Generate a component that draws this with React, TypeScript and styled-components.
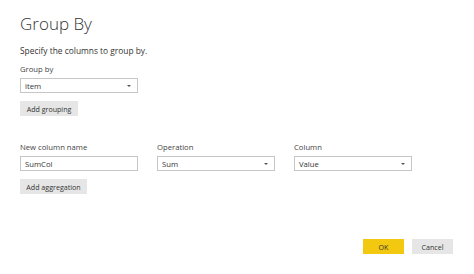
import { FC } from 'react'
import styled, { createGlobalStyle } from 'styled-components'

const GlobalStyle = createGlobalStyle`
	html, body {
		margin: 0;
		padding: 0;
		background: #ffffff;
	}
	body {
		font-family: 'Segoe UI', 'Open Sans', sans-serif;
		color: #333333;
	}
`

const Dialog = styled.div`
	position: relative;
	width: 474px;
	height: 274px;
	box-sizing: border-box;
	padding: 13px 21px 0 20px;
	display: flex;
	flex-direction: column;
	background: #ffffff;
`

const Title = styled.h1`
	margin: 0;
	font-weight: 300;
	font-size: 17px;
	line-height: 22px;
	color: #333333;
`

const Subtitle = styled.p`
	margin: 10px 0 0;
	font-size: 8.4px;
	line-height: 12px;
	color: #333333;
`

const Field = styled.div`
	display: flex;
	flex-direction: column;
	width: 118px;
`

const Label = styled.label`
	font-size: 7.7px;
	line-height: 12px;
	color: #444444;
	margin-bottom: 3px;
`

const Box = styled.div`
	position: relative;
	height: 15px;
	box-sizing: border-box;
	border: 1px solid #c6c6c6;
	padding: 0 12px 0 4px;
	display: flex;
	align-items: center;
	font-size: 7.7px;
	color: #333333;
	background: #ffffff;
`

const Arrow = styled.span`
	position: absolute;
	right: 6px;
	top: 6px;
	width: 0;
	height: 0;
	border-left: 2px solid transparent;
	border-right: 2px solid transparent;
	border-top: 2px solid #555555;
`

const Button = styled.button<{ $primary?: boolean; $width: number }>`
	width: ${(p) => p.$width}px;
	height: 15px;
	padding: 0;
	border: none;
	font-family: inherit;
	font-size: 7.1px;
	color: #333333;
	background: ${(p) => (p.$primary ? '#f2c811' : '#e6e6e6')};
`

const Section = styled.div<{ $top: number }>`
	display: flex;
	flex-direction: column;
	align-items: flex-start;
	gap: 8px;
	margin-top: ${(p) => p.$top}px;
`

const Row = styled.div`
	display: flex;
	gap: 19px;
`

const Footer = styled.div`
	display: flex;
	justify-content: flex-end;
	gap: 8px;
	margin-top: 45px;
`

const Select: FC<{ value: string }> = ({ value }) => (
	<Box>
		{value}
		<Arrow />
	</Box>
)

export default function App() {
	return (
		<>
			<GlobalStyle />
			<Dialog>
				<Title>Group By</Title>
				<Subtitle>Specify the columns to group by.</Subtitle>
				<Section $top={6}>
					<Field>
						<Label>Group by</Label>
						<Select value='item' />
					</Field>
					<Button $width={58}>Add grouping</Button>
				</Section>
				<Section $top={25}>
					<Row>
						<Field>
							<Label>New column name</Label>
							<Box>SumCol</Box>
						</Field>
						<Field>
							<Label>Operation</Label>
							<Select value='Sum' />
						</Field>
						<Field>
							<Label>Column</Label>
							<Select value='Value' />
						</Field>
					</Row>
					<Button $width={67}>Add aggregation</Button>
				</Section>
				<Footer>
					<Button $primary $width={41}>OK</Button>
					<Button $width={41}>Cancel</Button>
				</Footer>
			</Dialog>
		</>
	)
}
